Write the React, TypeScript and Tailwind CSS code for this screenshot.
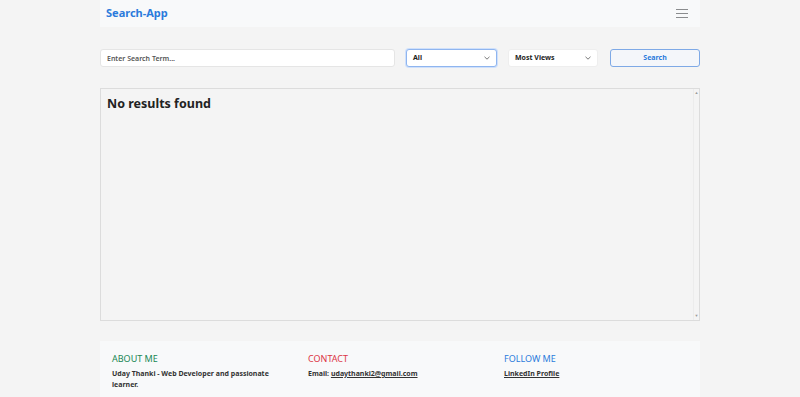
import React from 'react';

const App: React.FC = () => {
  return (
    <div className="min-h-[397px] bg-[#f4f4f4] font-['Noto_Sans',sans-serif] text-[#212529]">
      {/* Navbar */}
      <nav className="mx-auto flex h-[27px] w-[600px] items-center justify-between bg-[#f8f9fa] px-[6px]">
        <span className="text-[11px] font-bold text-[#2b7bdc]">Search-App</span>
        <div className="mr-[6px] flex w-[12px] flex-col gap-[3px]">
          <span className="h-[1px] bg-[#8a8c8e]" />
          <span className="h-[1px] bg-[#8a8c8e]" />
          <span className="h-[1px] bg-[#8a8c8e]" />
        </div>
      </nav>

      {/* Search row */}
      <div className="mx-auto mt-[22px] flex w-[600px] items-center">
        <input
          className="h-[18px] w-[295px] rounded-[3px] border border-[#e5e5e5] bg-white px-[6px] text-[7px] font-semibold text-[#333] placeholder:text-[#555] outline-none"
          placeholder="Enter Search Term..."
        />
        <div className="ml-[11px] flex h-[18px] w-[91px] items-center justify-between rounded-[3px] border border-[#8fb5ef] bg-white px-[6px] shadow-[0_0_0_1px_#cfe0fb]">
          <span className="text-[7px] font-bold text-[#222]">All</span>
          <Chevron />
        </div>
        <div className="ml-[11px] flex h-[18px] w-[90px] items-center justify-between rounded-[3px] border border-[#eeeeee] bg-white px-[6px]">
          <span className="text-[7px] font-bold text-[#222]">Most Views</span>
          <Chevron />
        </div>
        <button className="ml-[12px] h-[18px] w-[90px] rounded-[3px] border border-[#7ea9e6] bg-[#f4f6fa] text-[7px] font-bold text-[#2b7bdc]">
          Search
        </button>
      </div>

      {/* Results */}
      <div className="mx-auto mt-[21px] flex h-[233px] w-[600px] border border-[#dcdcdc] bg-[#f4f4f4]">
        <div className="flex-1 px-[6px] pt-[6px]">
          <h2 className="text-[12.5px] font-bold text-[#222]">No results found</h2>
        </div>
        <div className="flex w-[6px] flex-col items-center justify-between border-l border-[#ececec] py-[2px]">
          <span className="text-[4px] leading-none text-[#999]">▲</span>
          <span className="text-[4px] leading-none text-[#999]">▼</span>
        </div>
      </div>

      {/* Footer */}
      <footer className="mx-auto mt-[20px] grid h-[56px] w-[600px] grid-cols-[196px_196px_196px] bg-[#f8f9fa] pl-[12px] pt-[11px]">
        <div>
          <h3 className="text-[9px] leading-[13px] text-[#198754]">ABOUT ME</h3>
          <p className="mt-[3px] w-[170px] text-[7px] font-bold leading-[11px] text-[#333]">
            Uday Thanki - Web Developer and passionate learner.
          </p>
        </div>
        <div>
          <h3 className="text-[9px] leading-[13px] text-[#dc3545]">CONTACT</h3>
          <p className="mt-[3px] text-[7px] font-bold leading-[11px] text-[#333]">
            Email: <a href="#" className="underline">udaythanki2@gmail.com</a>
          </p>
        </div>
        <div>
          <h3 className="text-[9px] leading-[13px] text-[#2b7bdc]">FOLLOW ME</h3>
          <p className="mt-[3px] text-[7px] font-bold leading-[11px] text-[#333]">
            <a href="#" className="underline">LinkedIn Profile</a>
          </p>
        </div>
      </footer>
    </div>
  );
};

const Chevron: React.FC = () => (
  <svg width="6" height="4" viewBox="0 0 6 4" fill="none">
    <path d="M0.5 0.8 L3 3.2 L5.5 0.8" stroke="#555" strokeWidth="0.8" />
  </svg>
);

export default App;
